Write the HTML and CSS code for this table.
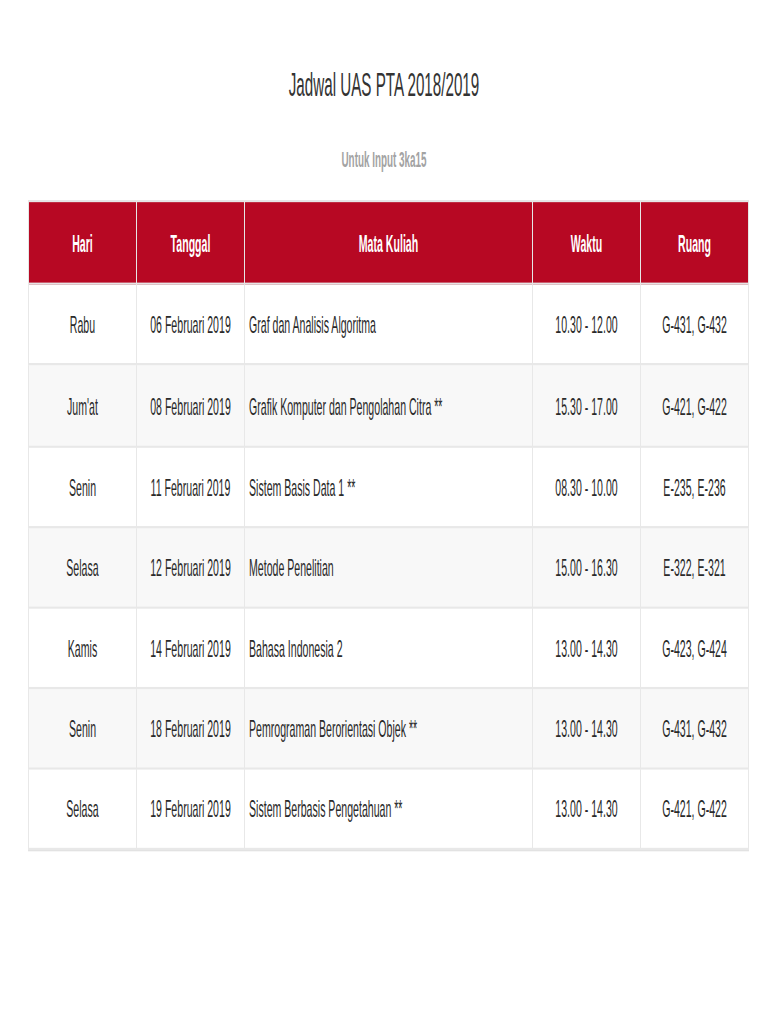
FILE: index.html
```html
<!DOCTYPE html>
<html lang="id">
<head>
<meta charset="utf-8">
<title>Jadwal UAS PTA 2018/2019</title>
<link rel="stylesheet" href="styles.css">
</head>
<body>
<div class="page">
  <h1 class="title">Jadwal UAS PTA 2018/2019</h1>
  <h3 class="subtitle">Untuk Input 3ka15</h3>
  <table class="schedule">
    <colgroup>
      <col class="c-hari">
      <col class="c-tgl">
      <col class="c-mk">
      <col class="c-waktu">
      <col class="c-ruang">
    </colgroup>
    <thead>
      <tr>
        <th>Hari</th>
        <th>Tanggal</th>
        <th>Mata Kuliah</th>
        <th>Waktu</th>
        <th>Ruang</th>
      </tr>
    </thead>
    <tbody>
      <tr>
        <td>Rabu</td>
        <td>06 Februari 2019</td>
        <td class="mk">Graf dan Analisis Algoritma</td>
        <td>10.30 - 12.00</td>
        <td>G-431, G-432</td>
      </tr>
      <tr>
        <td>Jum'at</td>
        <td>08 Februari 2019</td>
        <td class="mk">Grafik Komputer dan Pengolahan Citra **</td>
        <td>15.30 - 17.00</td>
        <td>G-421, G-422</td>
      </tr>
      <tr>
        <td>Senin</td>
        <td>11 Februari 2019</td>
        <td class="mk">Sistem Basis Data 1 **</td>
        <td>08.30 - 10.00</td>
        <td>E-235, E-236</td>
      </tr>
      <tr>
        <td>Selasa</td>
        <td>12 Februari 2019</td>
        <td class="mk">Metode Penelitian</td>
        <td>15.00 - 16.30</td>
        <td>E-322, E-321</td>
      </tr>
      <tr>
        <td>Kamis</td>
        <td>14 Februari 2019</td>
        <td class="mk">Bahasa Indonesia 2</td>
        <td>13.00 - 14.30</td>
        <td>G-423, G-424</td>
      </tr>
      <tr>
        <td>Senin</td>
        <td>18 Februari 2019</td>
        <td class="mk">Pemrograman Berorientasi Objek **</td>
        <td>13.00 - 14.30</td>
        <td>G-431, G-432</td>
      </tr>
      <tr>
        <td>Selasa</td>
        <td>19 Februari 2019</td>
        <td class="mk">Sistem Berbasis Pengetahuan **</td>
        <td>13.00 - 14.30</td>
        <td>G-421, G-422</td>
      </tr>
    </tbody>
  </table>
</div>
</body>
</html>
```
FILE: styles.css
```css
html, body {
  margin: 0;
  padding: 0;
  background: #ffffff;
  min-height: 1024px;
}

body {
  font-family: "Liberation Sans", Arial, sans-serif;
  color: #333333;
}

/* The reference shows tall, condensed lettering: the page is laid out
   at full width with small type and stretched vertically. */
.page {
  width: 768px;
  min-height: 471px;
  transform: scaleY(2.1739);
  transform-origin: 0 0;
  padding-top: 30px;
  box-sizing: border-box;
}

.title {
  margin: 0;
  font-size: 15.2px;
  line-height: 18.4px;
  font-weight: normal;
  text-align: center;
  color: #333333;
}

.subtitle {
  margin: 19.3px 0 0;
  font-size: 9.9px;
  line-height: 11.5px;
  font-weight: bold;
  text-align: center;
  color: #a3a3a3;
}

.schedule {
  margin: 12.5px 0 0 28px;
  width: 721px;
  border-collapse: collapse;
  table-layout: fixed;
  font-size: 10.58px;
  box-shadow: 0 0.6px 0 #e2e2e2;
}

.c-hari, .c-tgl, .c-waktu, .c-ruang { width: 15%; }
.c-mk { width: 40%; }

.schedule th {
  height: 37.7px;
  padding: 0 4px;
  background: #b70823;
  color: #ffffff;
  font-weight: bold;
  text-align: center;
  vertical-align: middle;
  border: 1px solid #e6e6e6;
}

.schedule td {
  height: 36.1px;
  padding: 0 4px;
  text-align: center;
  vertical-align: middle;
  color: #2a2a2a;
  border: 1px solid #e8e8e8;
}

.schedule td.mk {
  text-align: left;
}

.schedule tbody tr:nth-child(even) td {
  background: #f8f8f8;
}
```
